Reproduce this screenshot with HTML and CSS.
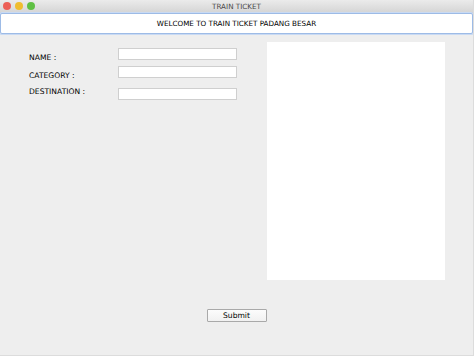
FILE: index.html
```html
<!DOCTYPE html>
<html lang="en">
  <head>
    <meta charset="UTF-8" />
    <title>TRAIN TICKET</title>
    <link rel="stylesheet" href="styles.css">
  </head>
  <body>
    <div class="window">
      <div class="titlebar">
        <div class="lights">
          <span class="light red"></span>
          <span class="light yellow"></span>
          <span class="light green"></span>
        </div>
        <div class="title">TRAIN TICKET</div>
        <div></div>
      </div>

      <div class="welcome">WELCOME TO TRAIN TICKET PADANG BESAR</div>

      <div class="main">
        <div class="labels">
          <label class="label name">NAME :</label>
          <label class="label category">CATEGORY :</label>
          <label class="label destination">DESTINATION :</label>
        </div>

        <div class="inputs">
          <input class="field first" type="text" />
          <input class="field second" type="text" />
          <input class="field third" type="text" />
        </div>

        <div class="output"></div>
      </div>

      <div class="footer">
        <button class="submit">Submit</button>
      </div>
    </div>
  </body>
</html>
```

FILE: styles.css
```css
:root {
  --bg-color: #eeeeee;
  --focus-color: #9dbbe6;
  --text-color: #000;
}

* {
  padding: 0;
  margin: 0;
  box-sizing: border-box;
}

body {
  background-color: var(--bg-color);
  font-family: 'DejaVu Sans', Verdana, sans-serif;
  color: var(--text-color);
}

.window {
  width: 474px;
  height: 356px;
  display: flex;
  flex-direction: column;
  background-color: var(--bg-color);
  border-right: 1px solid #dcdcdc;
  border-bottom: 1px solid #dcdcdc;
  overflow: hidden;
}

.titlebar {
  height: 13px;
  display: grid;
  grid-template-columns: 80px 1fr 80px;
  align-items: center;
  background: linear-gradient(#ebebeb, #d6d6d6);
  border-bottom: 1px solid #c8c8c8;
}

.lights {
  display: flex;
  gap: 4px;
  padding-left: 3px;
}

.light {
  width: 8px;
  height: 8px;
  border-radius: 50%;
}

.red {
  background-color: #ec5f56;
}

.yellow {
  background-color: #efbd2f;
}

.green {
  background-color: #5fc044;
}

.title {
  text-align: center;
  font-size: 7.2px;
  color: #4a4a4a;
}

.welcome {
  height: 21px;
  line-height: 19px;
  text-align: center;
  font-size: 7.2px;
  background-color: white;
  border: 1px solid var(--focus-color);
  border-radius: 2px;
  box-shadow: 0 0 0 1px #c9daf3;
}

.main {
  display: flex;
  padding-left: 29px;
}

.labels {
  width: 89px;
  display: flex;
  flex-direction: column;
  padding-top: 19px;
}

.label {
  font-size: 7.6px;
  line-height: 9px;
}

.category {
  margin-top: 9px;
}

.destination {
  margin-top: 7px;
}

.inputs {
  width: 119px;
  display: flex;
  flex-direction: column;
  padding-top: 14px;
}

.field {
  height: 12px;
  background-color: white;
  border: 1px solid #cfcfcf;
  outline: none;
}

.second {
  margin-top: 6px;
}

.third {
  margin-top: 10px;
}

.output {
  width: 178px;
  height: 238px;
  margin-top: 8px;
  margin-left: 30px;
  background-color: white;
}

.footer {
  display: flex;
  justify-content: center;
  padding-top: 29px;
}

.submit {
  width: 60px;
  height: 13px;
  font-family: 'DejaVu Sans', Verdana, sans-serif;
  font-size: 7.6px;
  color: var(--text-color);
  background: linear-gradient(#fcfcfc, #f1f1f1);
  border: 1px solid #a9a9a9;
  border-radius: 1px;
}
```
